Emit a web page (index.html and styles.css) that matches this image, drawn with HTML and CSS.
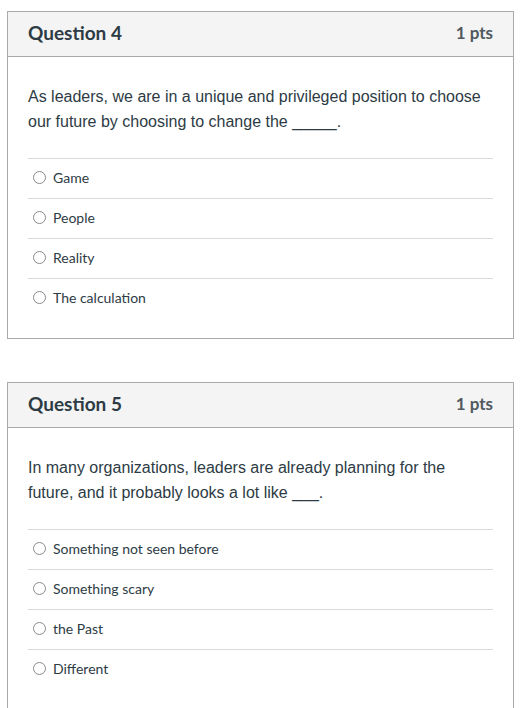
FILE: index.html
```html
<!DOCTYPE html>
<html>
<head>
<meta charset="utf-8">
<link rel="stylesheet" href="styles.css">
</head>
<body>
<div class="page">
  <section class="card">
    <header class="card-head">
      <h2 class="q-title">Question 4</h2>
      <span class="q-pts">1 pts</span>
    </header>
    <div class="card-body">
      <p class="q-text">As leaders, we are in a unique and privileged position to choose our future by choosing to change the _____.</p>
      <ul class="answers">
        <li class="answer"><span class="radio"></span><span class="label">Game</span></li>
        <li class="answer"><span class="radio"></span><span class="label">People</span></li>
        <li class="answer"><span class="radio"></span><span class="label">Reality</span></li>
        <li class="answer"><span class="radio"></span><span class="label">The calculation</span></li>
      </ul>
    </div>
  </section>
  <section class="card">
    <header class="card-head">
      <h2 class="q-title">Question 5</h2>
      <span class="q-pts">1 pts</span>
    </header>
    <div class="card-body">
      <p class="q-text">In many organizations, leaders are already planning for the future, and it probably looks a lot like ___.</p>
      <ul class="answers">
        <li class="answer"><span class="radio"></span><span class="label">Something not seen before</span></li>
        <li class="answer"><span class="radio"></span><span class="label">Something scary</span></li>
        <li class="answer"><span class="radio"></span><span class="label">the Past</span></li>
        <li class="answer"><span class="radio"></span><span class="label">Different</span></li>
      </ul>
    </div>
  </section>
</div>
</body>
</html>
```
FILE: styles.css
```css
html, body {
  margin: 0;
  padding: 0;
  background: #ffffff;
}
.page {
  padding: 11px 6px 0 7px;
  display: flex;
  flex-direction: column;
  gap: 43px;
}
.card {
  width: 507px;
  box-sizing: border-box;
  border: 1px solid #aaaaaa;
  background: #ffffff;
}
.card-head {
  height: 45px;
  box-sizing: border-box;
  background: #f4f4f4;
  border-bottom: 1px solid #aaaaaa;
  display: flex;
  align-items: center;
  justify-content: space-between;
  padding: 0 20px 3px 20px;
  color: #2d3b45;
  font-family: Lato, "Liberation Sans", sans-serif;
  font-weight: 700;
}
.q-title {
  margin: 0;
  font-size: 19px;
  font-weight: 700;
  color: #2d3b45;
}
.q-pts {
  font-size: 17px;
  font-weight: 700;
  color: #50595f;
}
.card-body {
  padding: 27px 20px 20px 20px;
}
.q-text {
  margin: 0 0 24px 0;
  font-family: "Liberation Sans", Arial, sans-serif;
  font-size: 16px;
  line-height: 25px;
  color: #2d3b45;
}
.answers {
  list-style: none;
  margin: 0;
  padding: 0;
}
.answer {
  height: 40px;
  box-sizing: border-box;
  border-top: 1px solid #dadada;
  display: flex;
  align-items: center;
  padding: 0 0 3px 5px;
  gap: 7px;
  font-family: Lato, "Liberation Sans", sans-serif;
  font-size: 14px;
  color: #2d3b45;
}
.radio {
  width: 13px;
  height: 13px;
  box-sizing: border-box;
  border: 1px solid #8a8a8a;
  border-radius: 50%;
  flex: none;
}
```
